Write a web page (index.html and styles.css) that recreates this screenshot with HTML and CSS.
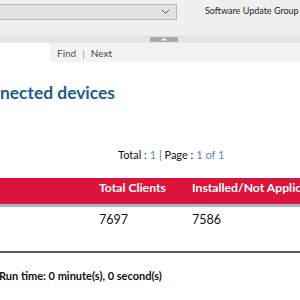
FILE: index.html
```html
<!DOCTYPE html>
<html>
<head>
<meta charset="utf-8">
<link rel="stylesheet" href="styles.css">
</head>
<body>
<div class="page">
  <div class="topbar">
    <div class="select"><svg class="chev" width="9" height="6" viewBox="0 0 9 6"><path d="M1 1 L4.5 4.5 L8 1" fill="none" stroke="#555" stroke-width="1"/></svg></div>
    <div class="label">Software Update Group</div>
  </div>
  <div class="splitter"><div class="handle"><svg width="8" height="4" viewBox="0 0 8 4"><path d="M1 3.5 L4 0.5 L7 3.5 Z" fill="#eee"/></svg></div></div>
  <div class="toolbar">
    <div class="blank"></div>
    <div class="tools"><span class="find">Find</span><span class="sep">|</span><span class="next">Next</span></div>
  </div>
  <div class="report">
    <h1 class="title">nected devices</h1>
    <div class="pager"><span>Total : </span><span class="num">1</span><span class="bar"> | </span><span>Page : </span><span class="num">1 of 1</span></div>
    <div class="thead">
      <div class="c1"></div>
      <div class="c2">Total Clients</div>
      <div class="c3">Installed/Not Applicable</div>
    </div>
    <div class="trow">
      <div class="c1"></div>
      <div class="c2">7697</div>
      <div class="c3">7586</div>
    </div>
    <div class="rule"></div>
    <div class="runtime">Run time: 0 minute(s), 0 second(s)</div>
  </div>
</div>
</body>
</html>
```
FILE: styles.css
```css
html, body { margin: 0; padding: 0; background: #fff; }
body { width: 300px; height: 300px; overflow: hidden; font-family: Lato, "Open Sans", sans-serif; }
.page { width: 300px; }
.topbar { height: 35px; background: #f0f0f0; display: flex; align-items: flex-start; }
.select { flex: none; margin-top: 4px; margin-left: -2px; width: 177px; height: 14px; background: #e2e2e2; border: 1px solid #b9b9b9; display: flex; align-items: center; justify-content: flex-end; }
.chev { margin-right: 6px; }
.label { flex: none; margin-left: 28px; margin-top: 5px; font-size: 9px; color: #222; white-space: nowrap; }
.splitter { height: 8px; background: #e6e6e6; display: flex; align-items: center; }
.handle { margin-left: 150px; width: 28px; height: 5px; background: #a9a9a9; display: flex; align-items: center; justify-content: center; }
.handle svg { display: block; }
.toolbar { height: 19px; display: flex; }
.blank { width: 50px; background: #fff; }
.tools { flex: 1; background: #f3f3f3; display: flex; align-items: center; font-size: 10px; color: #555; padding-left: 7px; }
.sep { margin: 0 6px; color: #999; }
.next { color: #444; }
.report { padding-top: 22px; }
.title { margin: 0; font-size: 17.4px; font-weight: 700; color: #1b5e8b; line-height: 18px; height: 18px; }
.pager { margin-top: 46px; margin-left: 118px; font-size: 11px; color: #111; line-height: 14px; white-space: nowrap; }
.pager .num { color: #5a86b2; }
.pager .bar { color: #3a7ac0; }
.thead { margin-top: 16px; background: #dc143c; border-bottom: 3px solid #a8b6c4; display: flex; color: #fff; font-weight: 700; font-size: 12.2px; line-height: 16px; padding-top: 2px; box-sizing: border-box; height: 29px; white-space: nowrap; overflow: hidden; }
.c1 { width: 99px; flex: none; }
.c2 { width: 93px; flex: none; }
.c3 { flex: none; }
.trow { display: flex; font-size: 12.5px; color: #111; padding-top: 5px; height: 44px; box-sizing: border-box; }
.rule { height: 2px; background: #555; }
.runtime { margin-top: 16px; margin-left: -1px; font-size: 11px; font-weight: 700; color: #111; white-space: nowrap; }
```
